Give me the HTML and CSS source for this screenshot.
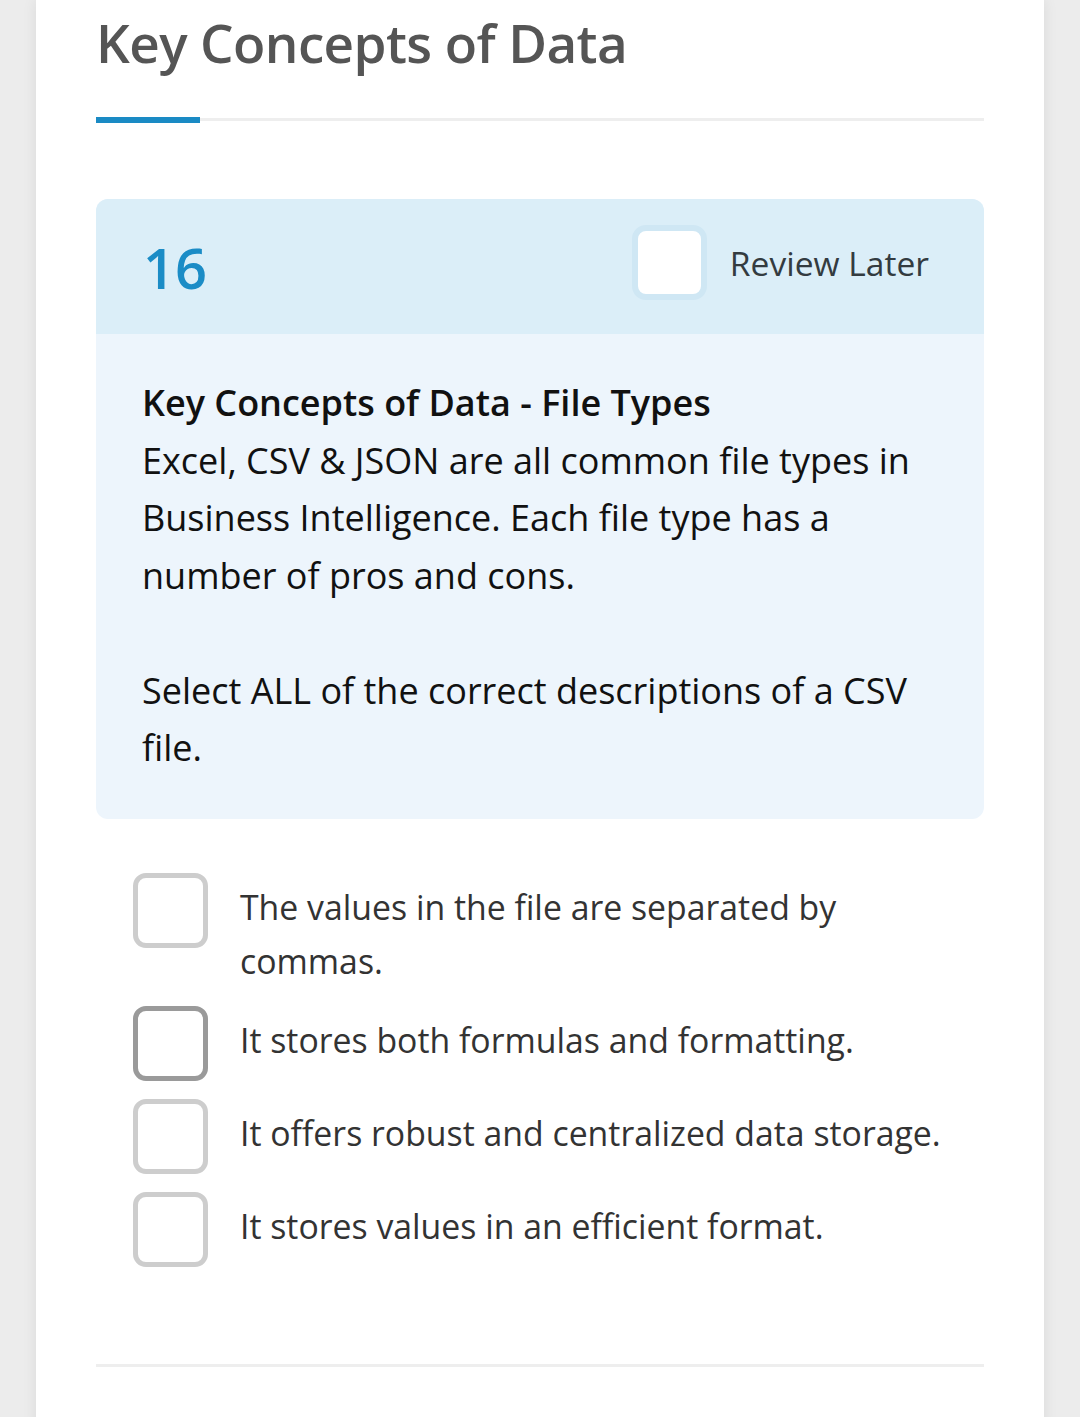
FILE: index.html
```html
<!DOCTYPE html>
<html lang="en">
<head>
    <meta charset="UTF-8">
    <meta name="viewport" content="width=device-width, initial-scale=1.0">
    <title>Key Concepts of Data</title>
    <link rel="stylesheet" href="styles.css">
</head>
<body>
    <div class="card">
        <h1 class="title">Key Concepts of Data</h1>
        <div class="progress">
            <div class="progress-fill"></div>
            <div class="progress-rest"></div>
        </div>

        <div class="question">
            <div class="question-head">
                <span class="question-num">16</span>
                <label class="review">
                    <span class="review-box"></span>
                    <span class="review-text">Review Later</span>
                </label>
            </div>
            <div class="question-body">
                <p>
                    <strong>Key Concepts of Data - File Types</strong><br>
                    Excel, CSV &amp; JSON are all common file types in Business Intelligence. Each file type has a number of pros and cons.<br><br>
                    Select ALL of the correct descriptions of a CSV file.
                </p>
            </div>
        </div>

        <ul class="options">
            <li class="option">
                <span class="check"></span>
                <span class="option-text">The values in the file are separated by commas.</span>
            </li>
            <li class="option">
                <span class="check focused"></span>
                <span class="option-text">It stores both formulas and formatting.</span>
            </li>
            <li class="option">
                <span class="check"></span>
                <span class="option-text">It offers robust and centralized data storage.</span>
            </li>
            <li class="option">
                <span class="check"></span>
                <span class="option-text">It stores values in an efficient format.</span>
            </li>
        </ul>

        <div class="divider"></div>
    </div>
</body>
</html>
```

FILE: styles.css
```css
body {
    margin: 0;
    background-color: #ececec;
    font-family: "Open Sans", "Noto Sans", sans-serif;
}

.card {
    width: 888px;
    min-height: 1417px;
    margin: 0 36px;
    padding: 11px 60px 0;
    background-color: white;
    box-shadow: 0 0 14px rgba(0, 0, 0, 0.08);
    box-sizing: content-box;
}

.title {
    margin: 0;
    font-size: 53px;
    line-height: 64px;
    font-weight: 600;
    letter-spacing: -0.6px;
    color: #555;
}

.progress {
    display: flex;
    align-items: flex-start;
    margin-top: 42px;
}

.progress-fill {
    width: 104px;
    height: 6px;
    background-color: #1a8ac4;
}

.progress-rest {
    flex: 1;
    height: 3px;
    margin-top: 1px;
    background-color: #eee;
}

.question {
    margin-top: 76px;
    border-radius: 12px;
    overflow: hidden;
    background-color: #edf5fc;
}

.question-head {
    display: flex;
    align-items: center;
    justify-content: space-between;
    height: 135px;
    padding: 0 55px 0 47px;
    background-color: #dbeef8;
}

.question-num {
    font-size: 56px;
    font-weight: 600;
    color: #1b8cc6;
}

.review {
    display: flex;
    align-items: center;
    gap: 23px;
    margin-top: -8px;
}

.review-box {
    flex: none;
    width: 75px;
    height: 75px;
    box-sizing: border-box;
    border: 6px solid #cfe7f4;
    border-radius: 14px;
    background-color: white;
}

.review-text {
    font-size: 33.6px;
    color: #333b40;
}

.question-body {
    padding: 40px 46px 42px;
}

.question-body p {
    margin: 0;
    font-size: 36px;
    line-height: 57.5px;
    color: #111;
}

.question-body strong {
    font-weight: 600;
}

.options {
    list-style: none;
    margin: 54px 0 0;
    padding: 0 0 0 37px;
}

.option {
    display: flex;
    align-items: flex-start;
    gap: 32px;
    margin-bottom: 18px;
}

.check {
    flex: none;
    width: 75px;
    height: 75px;
    box-sizing: border-box;
    border: 5px solid #cdcdcd;
    border-radius: 13px;
}

.check.focused {
    border-color: #9a9a9a;
}

.option-text {
    padding-top: 7px;
    font-size: 33.8px;
    line-height: 54px;
    color: #333;
}

.divider {
    height: 3px;
    margin-top: 97px;
    background-color: #eee;
}
```
